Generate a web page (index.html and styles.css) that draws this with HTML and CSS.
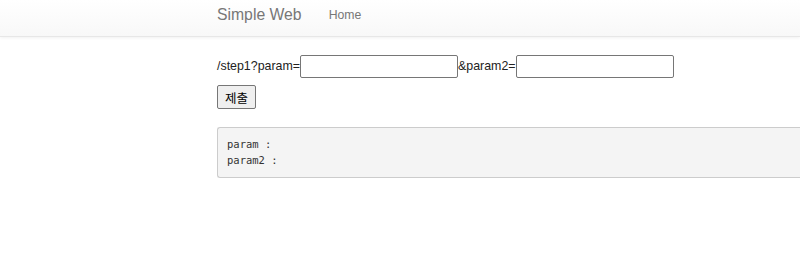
FILE: index.html
```html
<!DOCTYPE html>
<html lang="ko">
<head>
<meta charset="UTF-8">
<meta name="viewport" content="width=device-width, initial-scale=1.0">
<title>Simple Web</title>
<link rel="stylesheet" href="styles.css">
</head>
<body>
<nav class="navbar">
    <div class="container nav-inner">
        <a href="#" class="brand">Simple Web</a>
        <a href="#" class="nav-link">Home</a>
    </div>
</nav>

<div class="container">
    <form class="query-form">
        /step1?param=<input type="text" name="param" class="field">&amp;param2=<input type="text" name="param2" class="field">
    </form>
    <button type="button" class="submit-button">제출</button>
    <pre class="result">param : 
param2 : </pre>
</div>
</body>
</html>
```

FILE: styles.css
```css
body {
    margin: 0;
    font-family: "Liberation Sans", Arial, sans-serif;
    font-size: 12.4px;
    color: #222;
    background: #fff;
}

.navbar {
    height: 36px;
    background: linear-gradient(to bottom, #fff 0%, #f8f8f8 100%);
    border-bottom: 1px solid #e7e7e7;
    box-shadow: 0 1px 3px rgba(0, 0, 0, 0.06);
}

.container {
    margin-left: 217px;
}

.nav-inner {
    display: flex;
    align-items: center;
    height: 30px;
}

.brand {
    font-size: 15.75px;
    color: #777;
    text-decoration: none;
    margin-right: 27px;
}

.nav-link {
    font-size: 12.25px;
    color: #777;
    text-decoration: none;
}

.query-form {
    margin: 17px 0 0;
    display: flex;
    align-items: center;
    line-height: 24px;
}

.field {
    width: 154px;
    height: 21px;
    padding: 0 1px;
    margin: 0;
    border: 1px solid #767676;
    border-radius: 2px;
    font-size: 12px;
}

.submit-button {
    display: block;
    margin-top: 7px;
    height: 24px;
    padding: 0 7px;
    font-family: "Noto Sans CJK KR", "Liberation Sans", sans-serif;
    font-size: 12.5px;
    color: #000;
    background: #efefef;
    border: 1px solid #767676;
    border-radius: 2px;
}

.result {
    margin: 18px 0 0;
    padding: 8px 9px;
    height: 33px;
    font-family: "DejaVu Sans Mono", monospace;
    font-size: 10.5px;
    line-height: 16px;
    color: #333;
    background: #f4f4f4;
    border: 1px solid #ccc;
    border-right: none;
    border-radius: 3px 0 0 3px;
}
```
